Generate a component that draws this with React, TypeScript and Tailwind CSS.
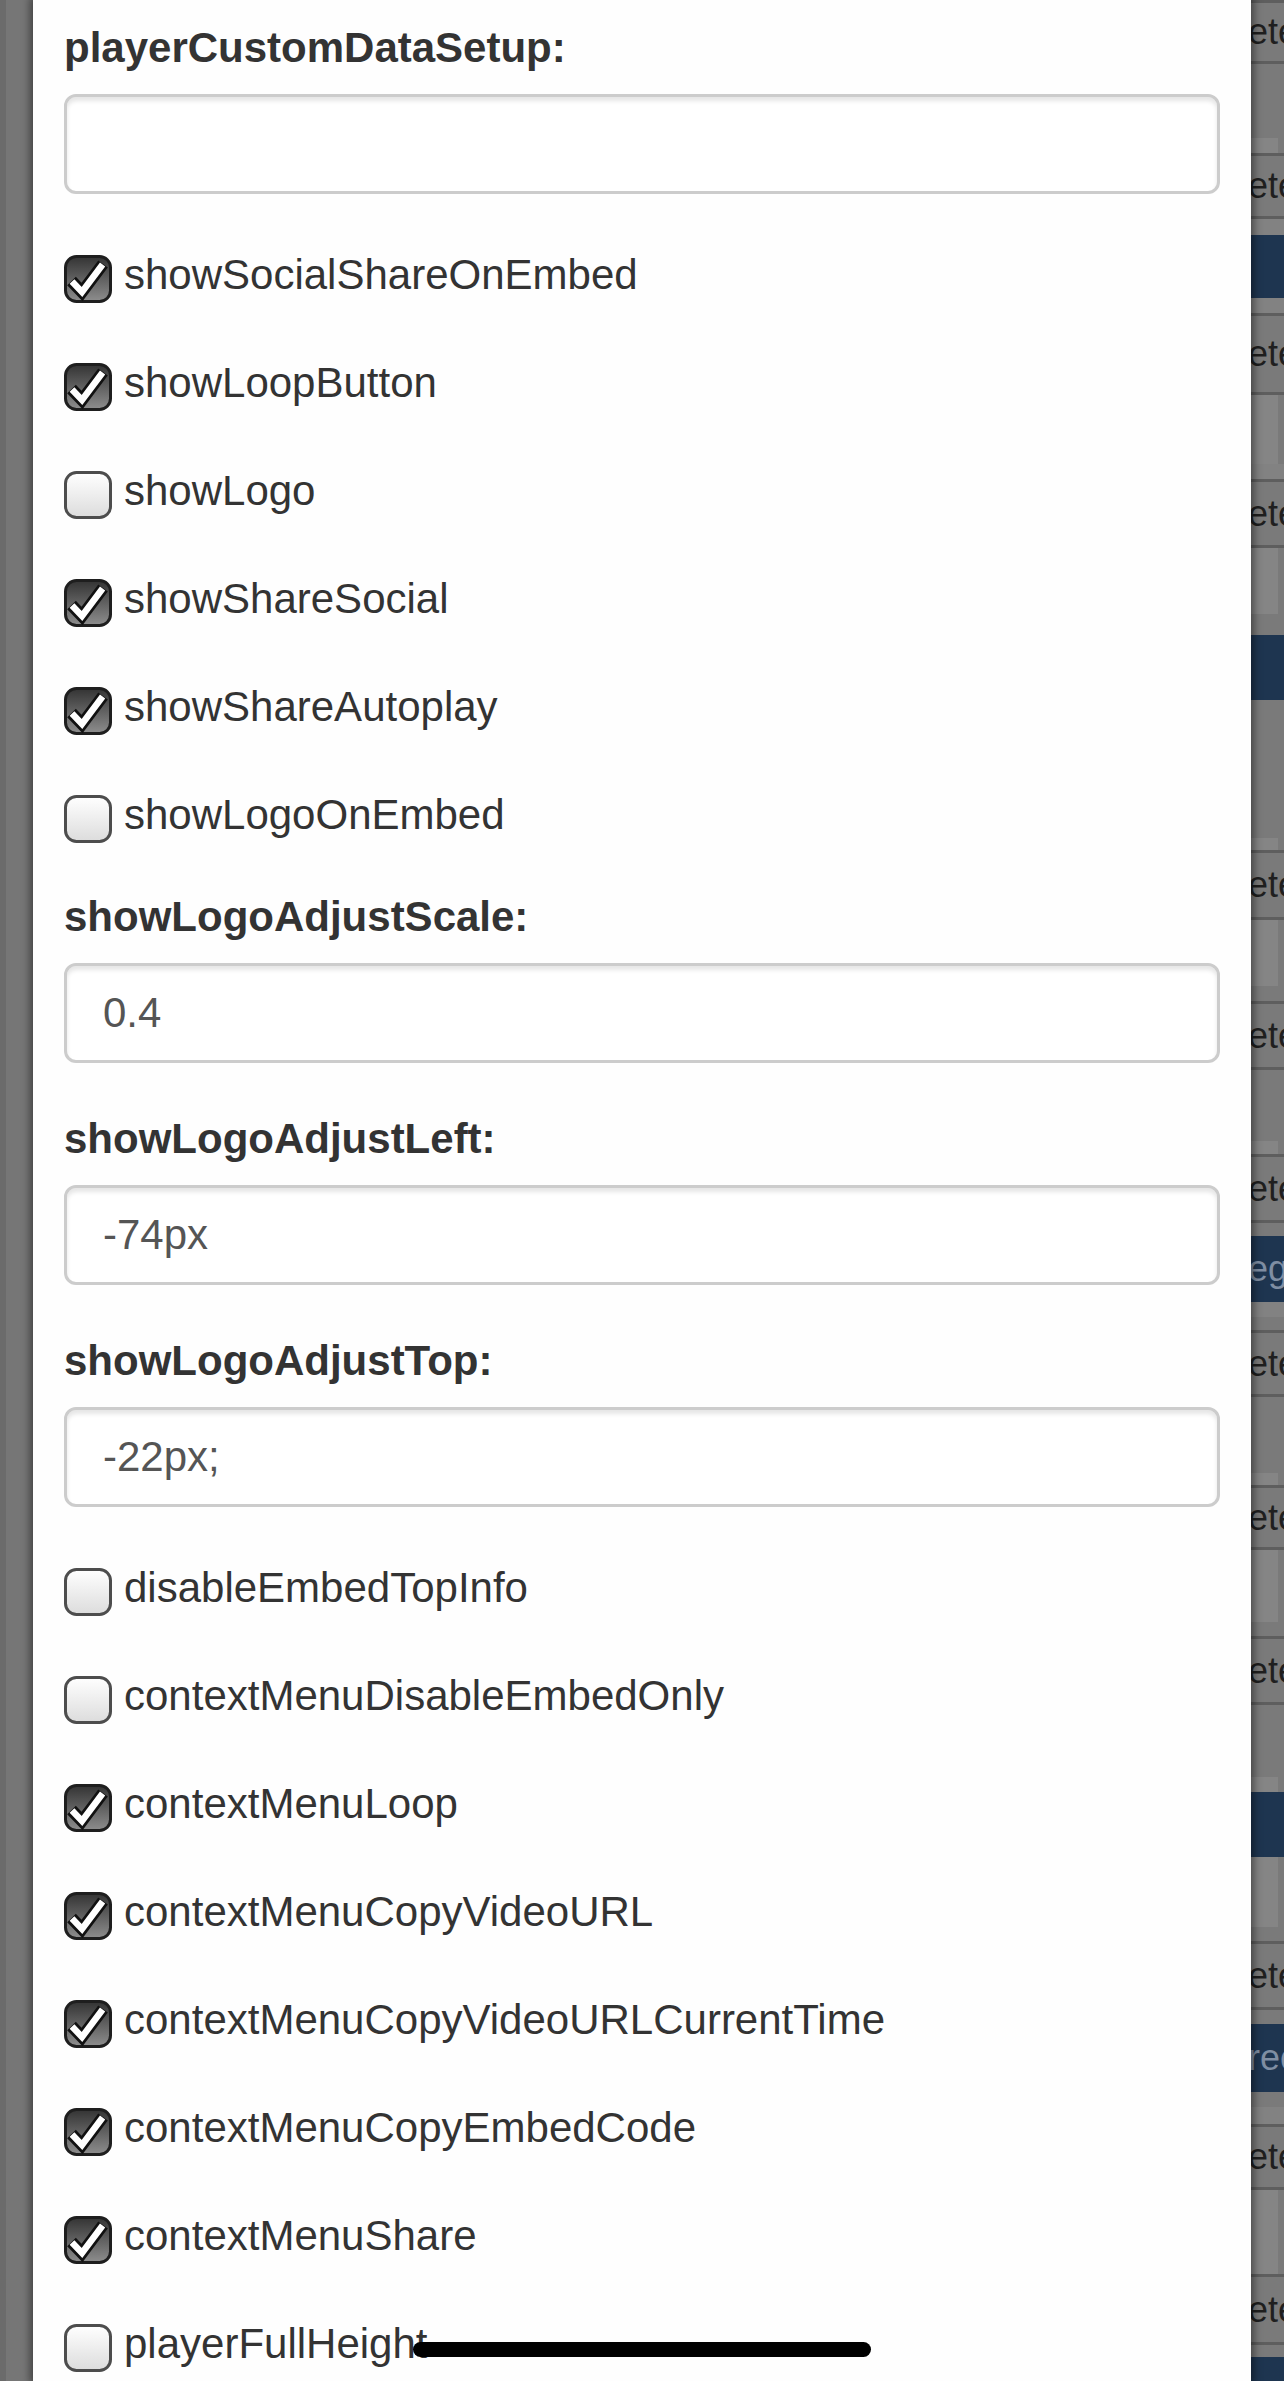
import React, { useId } from "react";

type Seg = { t: "line" | "text" | "grey" | "box" | "stripe" | "navy"; h: number; s?: string };

const segs: Seg[] = [
  { t: "line", h: 3 }, { t: "text", h: 58 }, { t: "line", h: 3 }, { t: "grey", h: 74 }, { t: "box", h: 15 },
  { t: "line", h: 3 }, { t: "text", h: 60 }, { t: "line", h: 3 }, { t: "stripe", h: 16 }, { t: "navy", h: 63 },
  { t: "stripe", h: 15 }, { t: "line", h: 3 }, { t: "text", h: 76 }, { t: "line", h: 3 }, { t: "box", h: 69 },
  { t: "stripe", h: 15 }, { t: "line", h: 3 }, { t: "text", h: 63 }, { t: "line", h: 3 }, { t: "box", h: 66 },
  { t: "grey", h: 21 }, { t: "navy", h: 65 }, { t: "grey", h: 138 }, { t: "box", h: 12 }, { t: "line", h: 3 },
  { t: "text", h: 64 }, { t: "line", h: 3 }, { t: "box", h: 66 }, { t: "grey", h: 15 }, { t: "line", h: 3 },
  { t: "text", h: 63 }, { t: "line", h: 3 }, { t: "grey", h: 71 }, { t: "box", h: 13 }, { t: "line", h: 3 },
  { t: "text", h: 63 }, { t: "line", h: 3 }, { t: "grey", h: 13 }, { t: "navy", h: 66, s: "eg" }, { t: "stripe", h: 15 },
  { t: "grey", h: 13 }, { t: "line", h: 3 }, { t: "text", h: 61 }, { t: "line", h: 3 }, { t: "grey", h: 76 },
  { t: "box", h: 12 }, { t: "line", h: 3 }, { t: "text", h: 59 }, { t: "line", h: 3 }, { t: "box", h: 72 },
  { t: "grey", h: 14 }, { t: "line", h: 3 }, { t: "text", h: 63 }, { t: "line", h: 3 }, { t: "grey", h: 72 },
  { t: "box", h: 15 }, { t: "navy", h: 65 }, { t: "box", h: 70 }, { t: "grey", h: 14 }, { t: "line", h: 3 },
  { t: "text", h: 63 }, { t: "line", h: 3 }, { t: "grey", h: 14 }, { t: "navy", h: 68, s: "rec" }, { t: "grey", h: 15 },
  { t: "stripe", h: 17 }, { t: "line", h: 3 }, { t: "text", h: 60 }, { t: "line", h: 3 }, { t: "box", h: 84 },
  { t: "line", h: 3 }, { t: "text", h: 65 }, { t: "line", h: 3 }, { t: "grey", h: 12 }, { t: "navy", h: 60 },
];

function StripSeg({ seg }: { seg: Seg }) {
  const style = { height: seg.h };
  if (seg.t === "line") return <div className="w-full shrink-0 bg-[#5e5e5e]" style={style} />;
  if (seg.t === "grey") return <div className="w-full shrink-0" style={style} />;
  if (seg.t === "stripe") return <div className="w-full shrink-0 bg-[#828282]" style={style} />;
  if (seg.t === "box")
    return (
      <div className="flex w-full shrink-0" style={style}>
        <div className="h-full w-[27px] bg-[#858585]" />
      </div>
    );
  if (seg.t === "navy")
    return (
      <div className="flex w-full shrink-0 items-center overflow-hidden bg-[#1e3550] text-[36px] leading-none text-[#7f8ea3]" style={style}>
        {seg.s ? <span className="ml-[-3px] whitespace-nowrap">{seg.s}</span> : null}
      </div>
    );
  return (
    <div className="flex w-full shrink-0 items-center overflow-hidden text-[36px] leading-none text-[#1f1f1f]" style={style}>
      <span className="ml-[-3px] whitespace-nowrap">ete</span>
    </div>
  );
}

function Checkbox({ checked }: { checked: boolean }) {
  const id = useId().replace(/:/g, "");
  return (
    <svg width="48" height="48" viewBox="0 0 48 48" className="shrink-0">
      <defs>
        <linearGradient id={`g${id}`} x1="0" y1="0" x2="0" y2="1">
          {checked ? (
            <>
              <stop offset="0" stopColor="#333333" />
              <stop offset="1" stopColor="#8e8e8e" />
            </>
          ) : (
            <>
              <stop offset="0" stopColor="#ffffff" />
              <stop offset="1" stopColor="#dcdcdc" />
            </>
          )}
        </linearGradient>
      </defs>
      <rect
        x="1.5"
        y="1.5"
        width="45"
        height="45"
        rx="11"
        fill={`url(#g${id})`}
        stroke={checked ? "#1e1e1e" : "#4d4d4d"}
        strokeWidth="3"
      />
      {checked ? (
        <>
          <path d="M7.5 26 L18 37 L39 9" fill="none" stroke="#111" strokeWidth="12" strokeLinejoin="miter" strokeLinecap="butt" />
          <path d="M8 26.5 L18 37 L38.6 9.5" fill="none" stroke="#fff" strokeWidth="6.5" strokeLinejoin="miter" strokeLinecap="butt" />
        </>
      ) : null}
    </svg>
  );
}

function Row({ label, checked }: { label: string; checked: boolean }) {
  return (
    <div className="flex h-[108px] items-center gap-[12px]">
      <Checkbox checked={checked} />
      <span className="mb-[8px] whitespace-nowrap text-[42px] leading-[48px] text-[#333333]">{label}</span>
    </div>
  );
}

function Field({ label, value, top }: { label: string; value: string; top: string }) {
  return (
    <div className={top}>
      <div className="h-[60px] text-[42px] font-bold leading-[60px] text-[#333333]">{label}</div>
      <div className="mt-[16px] flex h-[100px] items-center rounded-[12px] border-[3px] border-[#cccccc] bg-white pl-[36px] text-[42px] leading-[48px] text-[#555555] shadow-[inset_0_4px_4px_rgba(0,0,0,0.1)]">
        {value}
      </div>
    </div>
  );
}

const group1: [string, boolean][] = [
  ["showSocialShareOnEmbed", true],
  ["showLoopButton", true],
  ["showLogo", false],
  ["showShareSocial", true],
  ["showShareAutoplay", true],
  ["showLogoOnEmbed", false],
];

const group2: [string, boolean][] = [
  ["disableEmbedTopInfo", false],
  ["contextMenuDisableEmbedOnly", false],
  ["contextMenuLoop", true],
  ["contextMenuCopyVideoURL", true],
  ["contextMenuCopyVideoURLCurrentTime", true],
  ["contextMenuCopyEmbedCode", true],
  ["contextMenuShare", true],
  ["playerFullHeight", false],
];

export default function App() {
  return (
    <div
      className="relative flex h-[2381px] w-[1284px] overflow-hidden bg-[#777777]"
      style={{ fontFamily: '"Liberation Sans", Arial, Helvetica, sans-serif' }}
    >
      {/* left backdrop */}
      <div className="h-full w-[33px] shrink-0 border-l-[6px] border-[#6b6b6b] bg-[#767676]" />

      {/* modal */}
      <div className="relative z-10 h-full w-[1218px] shrink-0 bg-[#fefefe] px-[31px] pt-[18px] shadow-[0_0_8px_3px_rgba(0,0,0,0.45)]">
        <Field label="playerCustomDataSetup:" value="" top="" />
        <div className="mt-[31px]">
          {group1.map(([l, c]) => (
            <Row key={l} label={l} checked={c} />
          ))}
        </div>
        <Field label="showLogoAdjustScale:" value="0.4" top="mt-[14px]" />
        <Field label="showLogoAdjustLeft:" value="-74px" top="mt-[46px]" />
        <Field label="showLogoAdjustTop:" value="-22px;" top="mt-[46px]" />
        <div className="mt-[31px]">
          {group2.map(([l, c]) => (
            <Row key={l} label={l} checked={c} />
          ))}
        </div>
      </div>

      {/* right backdrop: dimmed page underneath */}
      <div className="flex h-full w-[33px] shrink-0 flex-col overflow-hidden bg-[#7a7a7a]">
        {segs.map((s, i) => (
          <StripSeg key={i} seg={s} />
        ))}
      </div>

      {/* home indicator */}
      <div className="absolute left-1/2 top-[2342px] z-20 h-[15px] w-[458px] -translate-x-1/2 rounded-full bg-black" />
    </div>
  );
}
